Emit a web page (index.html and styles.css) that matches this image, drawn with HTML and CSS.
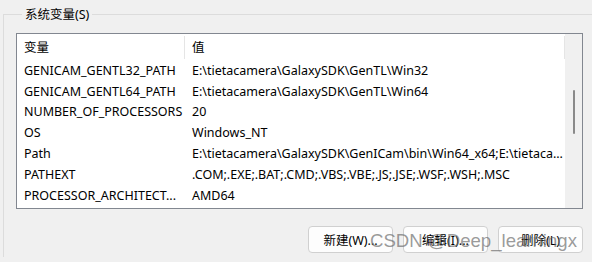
FILE: index.html
```html
<!DOCTYPE html>
<html lang="zh-CN">
<head>
<meta charset="utf-8">
<link rel="stylesheet" href="styles.css">
</head>
<body>
<fieldset class="group">
  <legend class="group-title">系统变量(S)</legend>
  <div class="content">
    <div class="listbox">
      <div class="list-main">
        <div class="list-header">
          <div class="col col-name">变量</div>
          <div class="col col-value">值</div>
        </div>
        <div class="row"><div class="col col-name">GENICAM_GENTL32_PATH</div><div class="col col-value">E:\tietacamera\GalaxySDK\GenTL\Win32</div></div>
        <div class="row"><div class="col col-name">GENICAM_GENTL64_PATH</div><div class="col col-value">E:\tietacamera\GalaxySDK\GenTL\Win64</div></div>
        <div class="row"><div class="col col-name">NUMBER_OF_PROCESSORS</div><div class="col col-value">20</div></div>
        <div class="row"><div class="col col-name">OS</div><div class="col col-value">Windows_NT</div></div>
        <div class="row"><div class="col col-name">Path</div><div class="col col-value">E:\tietacamera\GalaxySDK\GenICam\bin\Win64_x64;E:\tietaca...</div></div>
        <div class="row"><div class="col col-name">PATHEXT</div><div class="col col-value">.COM;.EXE;.BAT;.CMD;.VBS;.VBE;.JS;.JSE;.WSF;.WSH;.MSC</div></div>
        <div class="row"><div class="col col-name">PROCESSOR_ARCHITECT...</div><div class="col col-value">AMD64</div></div>
      </div>
      <div class="scrollbar"><div class="thumb"></div></div>
    </div>
    <div class="buttons">
      <button class="btn">新建(W)...</button>
      <button class="btn">编辑(I)...</button>
      <button class="btn">删除(L)</button>
    </div>
  </div>
</fieldset>
<div class="watermark">CSDN @Deep_learningx</div>
</body>
</html>
```
FILE: styles.css
```css
html, body {
  margin: 0;
  padding: 0;
}
body {
  width: 592px;
  height: 262px;
  overflow: hidden;
  background: #f0f0f0;
  font-family: "Noto Sans", "Noto Sans CJK SC", sans-serif;
  font-size: 12.5px;
  color: #000;
  position: relative;
}
.group {
  margin: 6px 0 0 3px;
  padding: 0 0 0 12px;
  border: 1px solid #dcdcdc;
  border-right: none;
  border-bottom: none;
  width: 577px;
  min-width: 0;
  height: 250px;
  box-sizing: content-box;
}
.group-title {
  margin-left: 6px;
  padding: 1px 3px 0;
  line-height: 16px;
  font-size: 12.5px;
}
.content {
  width: 567px;
  padding-top: 10px;
}
.listbox {
  display: flex;
  border: 1px solid #828790;
  background: #fff;
  height: 174px;
}
.list-main {
  flex: 1;
  min-width: 0;
}
.list-header {
  display: flex;
  height: 26px;
  align-items: center;
}
.list-header .col {
  height: 23px;
  line-height: 23px;
  border-right: 1px solid #e5e5e5;
  margin-top: 1px;
}
.row {
  display: flex;
  height: 20.8px;
  align-items: center;
}
.col {
  padding-left: 7px;
  white-space: nowrap;
  overflow: hidden;
  box-sizing: border-box;
}
.col-name {
  width: 168px;
  flex: none;
}
.col-value {
  flex: 1;
  min-width: 0;
}
.scrollbar {
  width: 17px;
  flex: none;
  background: #f0f0f0;
  display: flex;
  justify-content: center;
}
.thumb {
  width: 2px;
  height: 44px;
  margin-top: 56px;
  margin-left: 1px;
  background: #8a8a8a;
  border-radius: 1px;
}
.buttons {
  display: flex;
  justify-content: flex-end;
  gap: 10px;
  margin-top: 17px;
}
.btn {
  width: 85px;
  height: 27px;
  background: #fdfdfd;
  border: 1px solid #d0d0d0;
  border-radius: 4px;
  font-family: "Noto Sans", "Noto Sans CJK SC", sans-serif;
  font-size: 12.5px;
  color: #000;
  padding: 0;
}
.watermark {
  position: absolute;
  left: 370px;
  top: 230px;
  font-family: "Liberation Sans", sans-serif;
  font-size: 18.6px;
  color: rgba(110, 110, 110, 0.7);
  white-space: nowrap;
}
```
